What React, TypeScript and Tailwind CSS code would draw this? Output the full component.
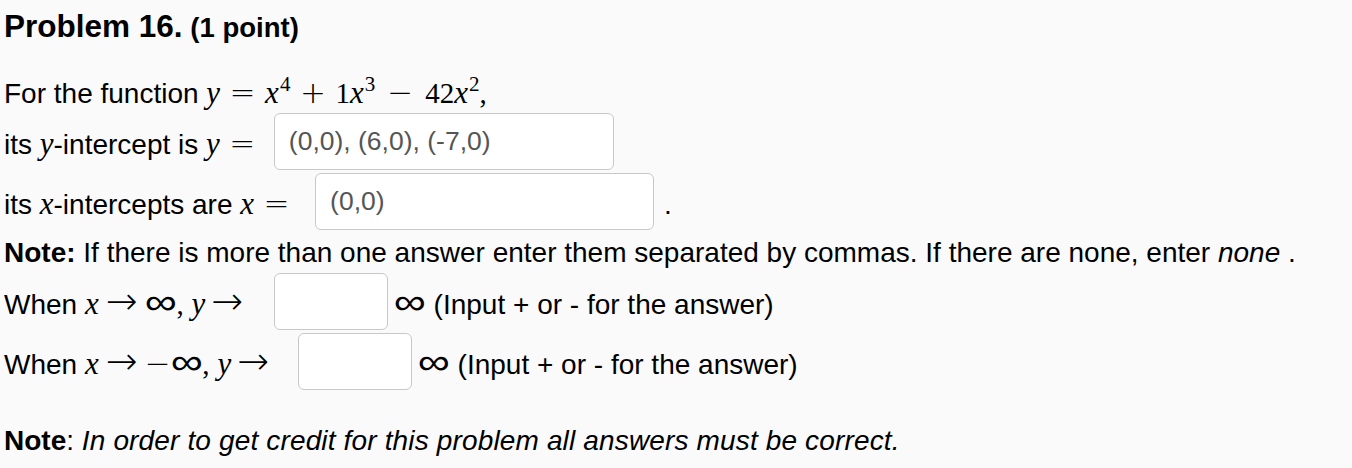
import React from 'react';

// math operator: symbol centered in a fixed-width slot
const Op: React.FC<{ children: React.ReactNode; w?: string; size?: string }> = ({
  children,
  w = 'w-[45px]',
  size = 'text-[31px]',
}) => (
  <span className={`inline-block ${w} ${size} text-center leading-none font-extralight font-['DejaVu_Sans',sans-serif]`}>
    {children}
  </span>
);

const V: React.FC<{ children: React.ReactNode }> = ({ children }) => (
  <i className="font-['Liberation_Serif',serif] text-[31px]">{children}</i>
);

const N: React.FC<{ children: React.ReactNode }> = ({ children }) => (
  <span className="font-['Liberation_Serif',serif] text-[29px]">{children}</span>
);

const Inf: React.FC = () => (
  <span className="inline-block leading-none font-extralight font-['DejaVu_Sans',sans-serif] text-[36px] scale-x-125 px-[3px]">∞</span>
);

const Sup: React.FC<{ children: React.ReactNode }> = ({ children }) => (
  <span className="relative -top-[12px] font-['Liberation_Serif',serif] text-[21px] pl-[1px]">{children}</span>
);

const Box: React.FC<{ value?: string; w: string }> = ({ value, w }) => (
  <div
    className={`${w} h-[57px] shrink-0 border border-[#c8c8c8] rounded-[6px] bg-white px-[14px] flex items-center text-[26.5px] text-[#555]`}
  >
    {value}
  </div>
);

export default function App() {
  return (
    <div className="h-[468px] overflow-hidden bg-[#fafafa] pl-[4px] text-black text-[28px] font-['Liberation_Sans',Arial,sans-serif]">
      {/* heading */}
      <div className="h-[52px] leading-[52px] font-bold whitespace-nowrap">
        <span className="text-[31.5px]">Problem 16.</span>{' '}
        <span className="text-[27.5px]">(1 point)</span>
      </div>

      <div className="mt-[21px] h-[40px] leading-[40px] whitespace-nowrap">
        For the function{' '}
        <V>y</V>
        <Op>=</Op>
        <V>x</V>
        <Sup>4</Sup>
        <Op>+</Op>
        <N>1</N>
        <V>x</V>
        <Sup>3</Sup>
        <Op w="w-[50px]">−</Op>
        <N>42</N>
        <V>x</V>
        <Sup>2</Sup>
        <N>,</N>
      </div>

      <div className="h-[57px] flex items-center whitespace-nowrap">
        <span className="pt-[6px]">
          its <V>y</V>-intercept is <V>y</V>
          <Op>=</Op>
        </span>
        <div className="ml-[9px]">
          <Box w="w-[340px]" value="(0,0), (6,0), (-7,0)" />
        </div>
      </div>

      <div className="mt-[3px] h-[57px] flex items-center whitespace-nowrap">
        <span className="pt-[6px]">
          its <V>x</V>-intercepts are <V>x</V>
          <Op>=</Op>
        </span>
        <div className="ml-[16px]">
          <Box w="w-[339px]" value="(0,0)" />
        </div>
        <span className="ml-[10px] pt-[6px]">.</span>
      </div>

      <div className="mt-[3px] h-[40px] leading-[40px] whitespace-nowrap">
        <b>Note:</b> If there is more than one answer enter them separated by commas. If there are none, enter{' '}
        <i>none</i> .
      </div>

      <div className="h-[57px] flex items-center whitespace-nowrap">
        <span className="pt-[6px]">
          When <V>x</V>
          <Op w="w-[46px]" size="text-[38px]">→</Op>
          <Inf />
          <N>,</N> <V>y</V>
          <Op w="w-[44px]" size="text-[38px]">→</Op>
        </span>
        <div className="ml-[25px]">
          <Box w="w-[114px]" />
        </div>
        <span className="ml-[6px] pt-[6px]">
          <Inf /> (Input + or - for the answer)
        </span>
      </div>

      <div className="mt-[3px] h-[57px] flex items-center whitespace-nowrap">
        <span className="pt-[6px]">
          When <V>x</V>
          <Op w="w-[46px]" size="text-[38px]">→</Op>
          <span className="inline-block leading-none font-extralight font-['DejaVu_Sans',sans-serif] text-[31px]">−</span>
          <Inf />
          <N>,</N> <V>y</V>
          <Op w="w-[44px]" size="text-[38px]">→</Op>
        </span>
        <div className="ml-[23px]">
          <Box w="w-[114px]" />
        </div>
        <span className="ml-[6px] pt-[6px]">
          <Inf /> (Input + or - for the answer)
        </span>
      </div>

      <div className="mt-[31px] h-[40px] leading-[40px] whitespace-nowrap">
        <b>Note</b>: <i className="tracking-[0.15px]">In order to get credit for this problem all answers must be correct.</i>
      </div>
    </div>
  );
}
